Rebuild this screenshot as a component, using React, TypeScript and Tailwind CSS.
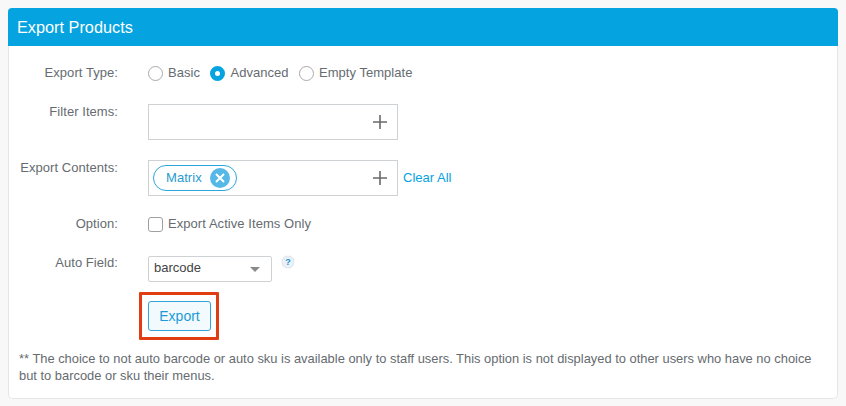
import React from "react";

function Label({ children, cls }: { children: React.ReactNode; cls: string }) {
  return <div className={`w-[109px] shrink-0 text-right text-[13px] leading-[16px] tracking-[0.06px] text-[#666b70] ${cls}`}>{children}</div>;
}

function Plus() {
  return (
    <svg width="14" height="14" viewBox="0 0 14 14" className="shrink-0">
      <path d="M7 0v14M0 7h14" stroke="#6a6a6a" strokeWidth="1.6" fill="none" />
    </svg>
  );
}

function Radio({ on, label }: { on?: boolean; label: string }) {
  return (
    <label className="flex items-center gap-[5px]">
      {on ? (
        <span className="box-border h-[15px] w-[15px] rounded-full border-[5px] border-[#05a3e0] bg-white" />
      ) : (
        <span className="box-border h-[15px] w-[15px] rounded-full border border-[#a9a9a9] bg-white" />
      )}
      <span>{label}</span>
    </label>
  );
}

export default function App() {
  return (
    <div className="h-[406px] w-[846px] overflow-hidden bg-[#f8f8f8] p-2 font-['Liberation_Sans','Arial',sans-serif]">
      <div className="h-[391px] w-[830px] rounded-[5px] border border-t-0 border-[#e4e6e8] bg-white">
        <div className="-mx-px flex h-[38px] items-center rounded-t-[4px] bg-[#05a3e0] pl-[9px] text-[16.3px] text-white">
          Export Products
        </div>
        <div>
          <div className="mt-[19px] flex h-[16px] items-center">
            <Label cls="">Export Type:</Label>
            <div className="ml-[30px] flex items-center gap-[10.5px] text-[13px] tracking-[0.03px] text-[#666b70]">
              <Radio label="Basic" />
              <Radio on label="Advanced" />
              <Radio label="Empty Template" />
            </div>
          </div>

          <div className="mt-[23px] flex">
            <Label cls="">Filter Items:</Label>
            <div className="ml-[30px] flex h-[36px] w-[250px] items-center justify-end border border-[#cfd2d4] pr-[10px]">
              <Plus />
            </div>
          </div>

          <div className="mt-[20px] flex">
            <Label cls="">Export Contents:</Label>
            <div className="ml-[30px] flex h-[36px] w-[250px] items-center justify-between border border-[#cfd2d4] pl-[4px] pr-[10px]">
              <span className="flex h-[26px] w-[84px] items-center justify-between rounded-full border border-[#2fa6d9] pl-[12px] pr-[6px] text-[13px] tracking-[0.06px] text-[#2a9bd0]">
                Matrix
                <span className="flex h-[20px] w-[20px] items-center justify-center rounded-full bg-[#55b8e6]">
                  <svg width="10" height="10" viewBox="0 0 10 10">
                    <path d="M1 1l8 8M9 1l-8 8" stroke="#fff" strokeWidth="2" fill="none" />
                  </svg>
                </span>
              </span>
              <Plus />
            </div>
            <a className="ml-[5px] mt-[10px] text-[13px] leading-[16px] text-[#05a3e0]">Clear All</a>
          </div>

          <div className="mt-[20px] flex h-[16px] items-center">
            <Label cls="">Option:</Label>
            <label className="ml-[30px] flex items-center gap-[5px] text-[13px] tracking-[0.06px] text-[#666b70]">
              <span className="box-border h-[15px] w-[15px] rounded-[3px] border border-[#9f9f9f] bg-white" />
              Export Active Items Only
            </label>
          </div>

          <div className="mt-[24px] flex">
            <Label cls="mt-[-1px]">Auto Field:</Label>
            <div className="ml-[30px] flex h-[26px] w-[124px] items-center justify-between rounded-[2px] border border-[#cfd2d4] pb-[2px] pl-[5px] pr-[11px] text-[13px] text-[#444]">
              barcode
              <svg width="10" height="5" viewBox="0 0 10 5" className="mt-[2px]">
                <path d="M0 0h10L5 5z" fill="#8a8a8a" />
              </svg>
            </div>
            <span className="ml-[10px] flex h-[12px] w-[12px] items-center justify-center rounded-full bg-[#eaf2f7] text-[9px] font-bold leading-none text-[#1b8fce] shadow-[0_0_1px_#9ab]">
              ?
            </span>
          </div>

          <div className="relative ml-[139px] mt-[19px] h-[30px] w-[63px]">
            <button className="box-border flex h-[30px] w-[63px] items-center justify-center rounded-[3px] border border-[#2fa6d9] bg-[#f3fafe] text-[14px] text-[#1d9ad6]">
              Export
            </button>
            <div className="absolute left-[-9px] top-[-9px] h-[48px] w-[80px] rounded-[1px] border-[3px] border-[#e03d12]" />
          </div>

          <p className="ml-[10px] mt-[19px] w-[800px] text-[12.9px] leading-[17px] text-[#666b70]">
            ** The choice to not auto barcode or auto sku is available only to staff users. This option is not displayed to other users who have no choice but to barcode or sku their menus.
          </p>
        </div>
      </div>
    </div>
  );
}
